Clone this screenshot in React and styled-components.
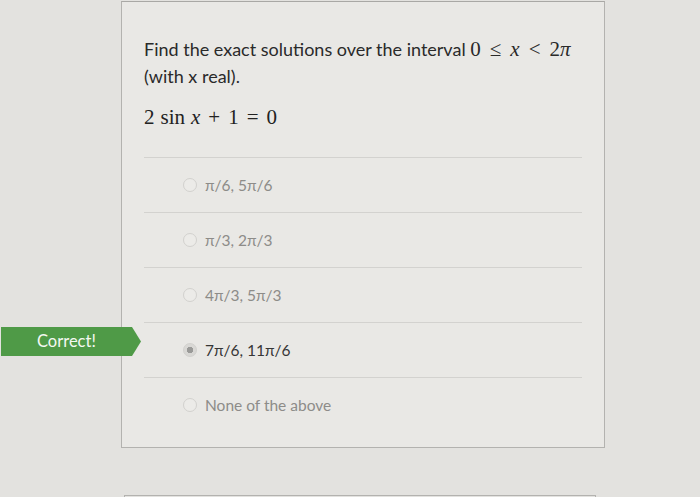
import React from 'react'
import styled, { createGlobalStyle } from 'styled-components'

const GlobalStyle = createGlobalStyle`
    html, body {
        margin: 0;
        padding: 0;
        background: #e3e2df;
        font-family: Lato, "Noto Sans", sans-serif;
    }
`

const options = [
    { label: 'π/6, 5π/6' },
    { label: 'π/3, 2π/3' },
    { label: '4π/3, 5π/3' },
    { label: '7π/6, 11π/6', selected: true, correct: true },
    { label: 'None of the above' },
]

const App = () => {
    return (
        <>
            <GlobalStyle />
            <Page>
                <Card>
                    <Question>
                        <p>
                            Find the exact solutions over the interval{' '}
                            <Math>
                                0<Op $gap={9}>≤</Op><i>x</i><Op $gap={9}>&lt;</Op>2<i>π</i>
                            </Math>
                            <br />
                            (with x real).
                        </p>
                        <Equation>
                            2<Fn>sin</Fn><i>x</i><Op $gap={8}>+</Op>1<Op $gap={8}>=</Op>0
                        </Equation>
                    </Question>
                    <Answers>
                        {options.map((o) => (
                            <Answer key={o.label}>
                                {o.correct && <Badge>Correct!</Badge>}
                                <Radio $selected={o.selected} />
                                <Label $selected={o.selected}>{o.label}</Label>
                            </Answer>
                        ))}
                    </Answers>
                </Card>
                <NextCard />
            </Page>
        </>
    )
}

const Page = styled.div`
    padding: 1px 0 0 121px;
    width: 700px;
    height: 497px;
    box-sizing: border-box;
    overflow: hidden;
`

const Card = styled.section`
    width: 484px;
    height: 447px;
    box-sizing: border-box;
    border: 1px solid #b3b2af;
    border-top-color: #a9a8a5;
    background: #e9e8e5;
    padding: 34px 22px 0 22px;
`

const Question = styled.div`
    color: #2a2a2a;
    font-size: 18px;
    line-height: 27px;
    padding-bottom: 26px;
    border-bottom: 1px solid #d3d2cf;
    p {
        margin: 0 0 14px 0;
    }
`

const Math = styled.span`
    font-family: "Liberation Serif", "DejaVu Serif", serif;
    font-size: 21px;
    i {
        font-style: italic;
    }
`

const Op = styled.span`
    margin: 0 ${(p) => p.$gap}px;
`

const Fn = styled.span`
    margin: 0 6px;
`

const Equation = styled.div`
    font-family: "Liberation Serif", "DejaVu Serif", serif;
    font-size: 21px;
    color: #222;
    i {
        font-style: italic;
    }
`

const Answers = styled.ul`
    list-style: none;
    margin: 0;
    padding: 0;
`

const Answer = styled.li`
    position: relative;
    display: flex;
    align-items: center;
    height: 54px;
    padding-left: 39px;
    border-bottom: 1px solid #d3d2cf;
    &:last-child {
        border-bottom: none;
    }
`

const Radio = styled.span`
    width: 12px;
    height: 12px;
    border-radius: 50%;
    border: 1px solid #d2d1ce;
    background: ${(p) => (p.$selected ? 'radial-gradient(circle, #9a9a98 0 3px, #d9d8d5 3.5px)' : '#ecebe8')};
    margin-right: 8px;
    flex-shrink: 0;
`

const Label = styled.span`
    font-size: 15.5px;
    color: ${(p) => (p.$selected ? '#363636' : '#8d8c89')};
`

const Badge = styled.div`
    position: absolute;
    left: -143px;
    top: 4px;
    width: 140px;
    height: 29px;
    background: #4f9a47;
    color: #f4f8f2;
    font-size: 16.5px;
    line-height: 28px;
    padding-left: 36px;
    box-sizing: border-box;
    clip-path: polygon(0 0, 131px 0, 140px 50%, 131px 100%, 0 100%);
`

const NextCard = styled.div`
    margin-top: 47px;
    width: 472px;
    height: 20px;
    border: 1px solid #b3b2af;
    border-bottom: none;
    box-sizing: border-box;
    margin-left: 3px;
`

export default App
